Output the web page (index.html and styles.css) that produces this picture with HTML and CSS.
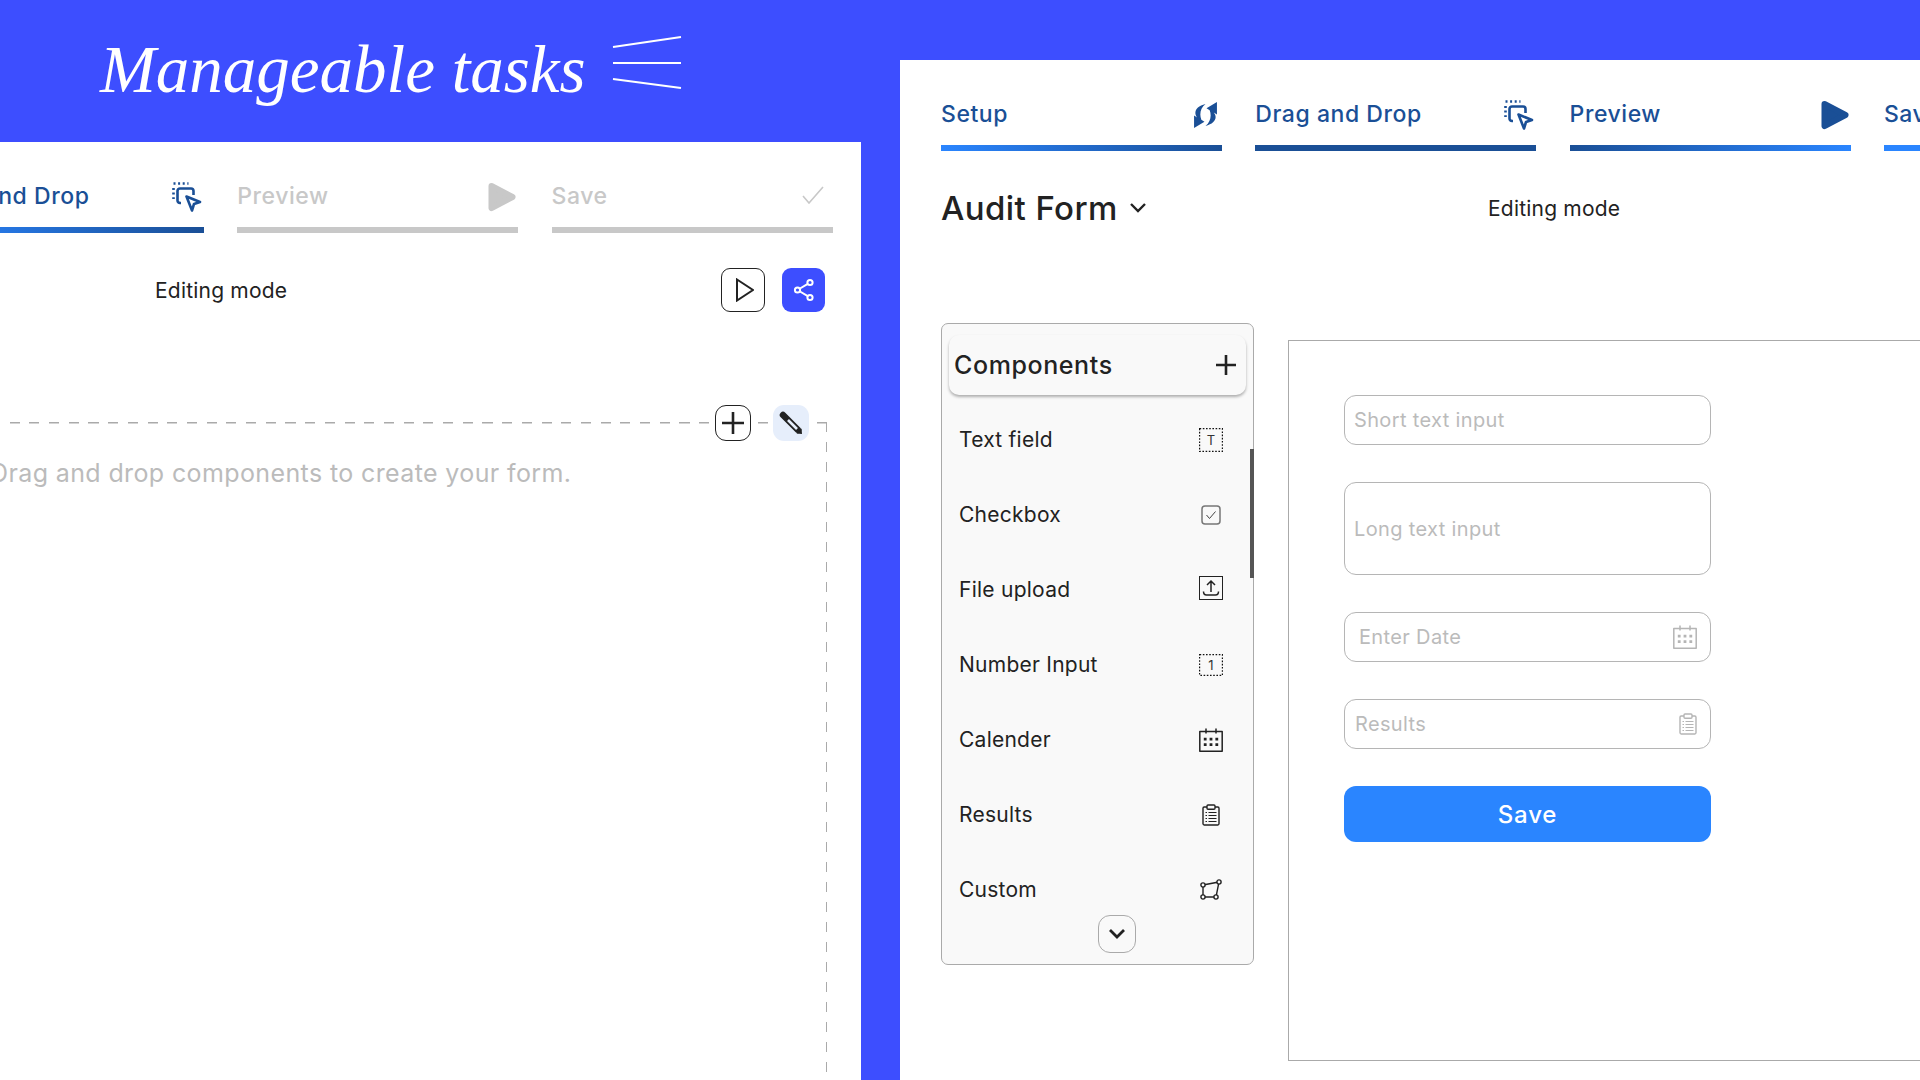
FILE: index.html
```html
<!DOCTYPE html>
<html lang="en">
<head>
  <meta charset="UTF-8" />
  <meta name="viewport" content="width=device-width, initial-scale=1.0" />
  <title>Manageable tasks</title>
  <link rel="stylesheet" href="styles.css">
</head>
<body>
  <svg class="sprites" width="0" height="0">
    <symbol id="i-drag" viewBox="0 0 30 30">
      <path d="M1.500 1.500h15M1.500 6v11" fill="none" stroke="currentColor" stroke-width="2.600" stroke-dasharray="2 2.600"/>
      <path d="M9 21H8a2.500 2.500 0 0 1-2.500-2.500V9A2.500 2.500 0 0 1 8 6.500h11A2.500 2.500 0 0 1 21.500 9v4" fill="none" stroke="currentColor" stroke-width="2.600"/>
      <path d="M14.500 14.500 28 20l-6 2-2 6.500z" fill="none" stroke="currentColor" stroke-width="2.600" stroke-linejoin="round"/>
    </symbol>
    <symbol id="i-play-solid" viewBox="0 0 28 30">
      <path d="M3.500 4 24.500 15 3.500 26z" fill="currentColor" stroke="currentColor" stroke-width="6" stroke-linejoin="round"/>
    </symbol>
    <symbol id="i-calendar" viewBox="0 0 24 24">
      <path d="M.8 3.500h22.400v19.700H.8zM7 .5v5M17 .5v5" fill="none" stroke="currentColor" stroke-width="1.500" stroke-linejoin="round"/>
      <path d="M4.800 9.800h2.800v2.800H4.800zM10.600 9.800h2.800v2.800h-2.800zM16.400 9.800h2.800v2.800h-2.800zM4.800 15.300h2.800v2.800H4.800zM10.600 15.300h2.800v2.800h-2.800zM16.400 15.300h2.800v2.800h-2.800z" fill="currentColor"/>
    </symbol>
    <symbol id="i-clipboard" viewBox="0 0 18 22">
      <path d="M5 3H2.200A1.300 1.300 0 0 0 1 4.300v15.500A1.300 1.300 0 0 0 2.200 21h13.600a1.300 1.300 0 0 0 1.200-1.200V4.300A1.300 1.300 0 0 0 15.800 3H13" fill="none" stroke="currentColor" stroke-width="1.400"/>
      <rect x="5" y="1" width="8" height="4.200" rx="1" fill="none" stroke="currentColor" stroke-width="1.400"/>
      <path d="M3.500 8.500h1.500M6.500 8.500h8M3.500 11.500h1.500M6.500 11.500h8M3.500 14.500h1.500M6.500 14.500h8M3.500 17.500h1.500M6.500 17.500h8" stroke="currentColor" stroke-width="1.200"/>
    </symbol>
  </svg>

  <div class="stage">
    <section class="left-col">
      <div class="banner">
        <span class="banner-title">Manageable tasks</span>
        <svg class="banner-lines" width="70" height="54" viewBox="0 0 70 54"><path d="M1 11 69 1M1 27h68M1 43l68 9" stroke="#fff" stroke-width="2" fill="none"/></svg>
      </div>

      <div class="panel panel-left">
        <div class="tabs tabs-left">
          <div class="tab">
            <div class="tab-head"><span class="tab-label">Drag and Drop</span><svg class="tab-icon" width="30" height="30"><use href="#i-drag"/></svg></div>
            <div class="tab-bar bar-in"></div>
          </div>
          <div class="tab tab-off">
            <div class="tab-head"><span class="tab-label">Preview</span><svg class="tab-icon" width="28" height="30"><use href="#i-play-solid"/></svg></div>
            <div class="tab-bar"></div>
          </div>
          <div class="tab tab-off">
            <div class="tab-head"><span class="tab-label">Save</span>
              <svg class="tab-icon tab-icon-check" width="22" height="18" viewBox="0 0 22 18"><path d="M1 10l6 7L21 1" fill="none" stroke="currentColor" stroke-width="1.600"/></svg>
            </div>
            <div class="tab-bar"></div>
          </div>
        </div>

        <div class="toolbar toolbar-left">
          <span class="mode">Editing mode</span>
          <div class="tool-btns">
            <button class="tool-btn">
              <svg width="22" height="24" viewBox="0 0 22 24"><path d="M5 1.500 21 12 5 22.500z" fill="none" stroke="#222" stroke-width="2"/></svg>
            </button>
            <button class="tool-btn tool-btn-blue">
              <svg width="24" height="24" viewBox="0 0 24 24" fill="none" stroke="#fff" stroke-width="2"><circle cx="18" cy="4.500" r="2.600"/><circle cx="5.500" cy="12" r="2.600"/><circle cx="18" cy="19.500" r="2.600"/><path d="M8 10.500l7.800-4.700M8 13.500l7.800 4.700"/></svg>
            </button>
          </div>
        </div>

        <div class="canvas">
          <p class="canvas-hint">Drag and drop components to create your form.</p>
          <button class="canvas-btn canvas-add">
            <svg width="26" height="26" viewBox="0 0 26 26"><path d="M13 2v22M2 13h22" stroke="#222" stroke-width="2.600"/></svg>
          </button>
          <button class="canvas-btn canvas-edit">
            <svg width="26" height="26" viewBox="0 0 26 26"><path d="M5 5 20 20" stroke="#222" stroke-width="6.500" stroke-linecap="round"/><path d="M10 10 19 19" stroke="#e6eefb" stroke-width="2.600"/><path d="M18.500 23.500 24 24l-.5-5.500z" fill="#222"/></svg>
          </button>
        </div>
      </div>
    </section>

    <section class="panel panel-right">
      <div class="tabs">
        <div class="tab">
          <div class="tab-head"><span class="tab-label">Setup</span>
            <svg class="tab-icon tab-icon-sync" width="23" height="26" viewBox="0 0 22 25" fill="currentColor"><path d="M22 0V12L19 10C23 15 20 21 11 23C16 19 17 13 15 8L12 6Z"/><path d="M22 0V12L19 10C23 15 20 21 11 23C16 19 17 13 15 8L12 6Z" transform="rotate(180 11 12.500)"/></svg>
          </div>
          <div class="tab-bar bar-out"></div>
        </div>
        <div class="tab">
          <div class="tab-head"><span class="tab-label">Drag and Drop</span><svg class="tab-icon" width="30" height="30"><use href="#i-drag"/></svg></div>
          <div class="tab-bar"></div>
        </div>
        <div class="tab">
          <div class="tab-head"><span class="tab-label">Preview</span><svg class="tab-icon" width="28" height="30"><use href="#i-play-solid"/></svg></div>
          <div class="tab-bar bar-in"></div>
        </div>
        <div class="tab">
          <div class="tab-head"><span class="tab-label">Save</span></div>
          <div class="tab-bar bar-light"></div>
        </div>
      </div>

      <div class="toolbar">
        <div class="form-title">
          <h2>Audit Form</h2>
          <svg width="18" height="12" viewBox="0 0 18 12"><path d="M2 2l7 7 7-7" fill="none" stroke="#222" stroke-width="2.400"/></svg>
        </div>
        <span class="mode">Editing mode</span>
      </div>

      <div class="workspace">
        <aside class="components">
          <div class="components-head">
            <h3>Components</h3>
            <svg width="20" height="20" viewBox="0 0 20 20"><path d="M10 0v20M0 10h20" stroke="#222" stroke-width="2.600"/></svg>
          </div>
          <ul class="comp-list">
            <li class="comp"><span>Text field</span><span class="comp-icon">
              <svg width="24" height="24" viewBox="0 0 24 24"><rect x=".6" y=".6" width="22.800" height="22.800" fill="none" stroke="#111" stroke-width="1.200" stroke-dasharray="1.600 1.600"/><text class="dash-text" x="12" y="16.500">T</text></svg>
            </span></li>
            <li class="comp"><span>Checkbox</span><span class="comp-icon">
              <svg width="20" height="20" viewBox="0 0 20 20"><rect x="1" y="1" width="18" height="18" rx="3" fill="none" stroke="#777" stroke-width="1.500"/><path d="M5.500 10l3 3.500 6-7" fill="none" stroke="#444" stroke-width="1"/></svg>
            </span></li>
            <li class="comp"><span>File upload</span><span class="comp-icon comp-icon-up">
              <svg width="24" height="24" viewBox="0 0 24 24" fill="none" stroke="#222"><rect x=".5" y=".5" width="23" height="23"/><path d="M12 16V5M8 9l4-4 4 4" stroke-width="1.500"/><path d="M4.500 15.500c0 3 1 3.500 3 3.500h9c2 0 3-.5 3-3.500" stroke-width="1.500"/></svg>
            </span></li>
            <li class="comp"><span>Number Input</span><span class="comp-icon">
              <svg width="24" height="22" viewBox="0 0 24 22"><rect x=".6" y=".6" width="22.800" height="20.800" fill="none" stroke="#111" stroke-width="1.200" stroke-dasharray="1.600 1.600"/><text class="dash-text" x="12" y="15.500">1</text></svg>
            </span></li>
            <li class="comp"><span>Calender</span><span class="comp-icon"><svg class="ico-dark" width="24" height="24"><use href="#i-calendar"/></svg></span></li>
            <li class="comp"><span>Results</span><span class="comp-icon"><svg class="ico-dark" width="18" height="22"><use href="#i-clipboard"/></svg></span></li>
            <li class="comp"><span>Custom</span><span class="comp-icon">
              <svg width="22" height="22" viewBox="0 0 22 22" fill="none" stroke="#222" stroke-width="1.400"><path d="M3 6 19 3 16 18H3z"/><g fill="#f9f9f9"><circle cx="3" cy="6" r="2.100"/><circle cx="19" cy="3" r="2.100"/><circle cx="3" cy="18" r="2.100"/><circle cx="16" cy="18" r="2.100"/></g></svg>
            </span></li>
          </ul>
          <div class="scroll-thumb"></div>
          <button class="comp-more">
            <svg width="18" height="12" viewBox="0 0 18 12"><path d="M2 2l7 7 7-7" fill="none" stroke="#222" stroke-width="2.800"/></svg>
          </button>
        </aside>

        <div class="form-area">
          <div class="field"><span class="hint">Short text input</span></div>
          <div class="field field-long"><span class="hint">Long text input</span></div>
          <div class="field field-date"><span class="hint">Enter Date</span><svg class="ico-faint" width="24" height="24"><use href="#i-calendar"/></svg></div>
          <div class="field field-result"><span class="hint">Results</span><svg class="ico-faint" width="18" height="22"><use href="#i-clipboard"/></svg></div>
          <button class="save-btn">Save</button>
        </div>
      </div>
    </section>
  </div>
</body>
</html>
```

FILE: styles.css
```css
* {
  box-sizing: border-box;
}

body {
  margin: 0;
  height: 1080px;
  overflow: hidden;
  background-color: #3d4eff;
  color: #222;
  font-family: Inter, "Noto Sans", sans-serif;
}

h2, h3, p, ul {
  margin: 0;
  padding: 0;
}

button {
  font-family: inherit;
  cursor: pointer;
}

.sprites {
  position: absolute;
}

.stage {
  display: flex;
  gap: 39px;
  height: 1080px;
}

.left-col {
  display: flex;
  flex-direction: column;
  width: 861px;
  flex-shrink: 0;
}

.banner {
  display: flex;
  align-items: center;
  gap: 26px;
  height: 142px;
  padding: 0 0 4px 100px;
  color: #fff;
}

.banner-title {
  font-family: "Liberation Serif", serif;
  font-style: italic;
  font-size: 67px;
  line-height: 1;
  white-space: nowrap;
}

.banner-lines {
  margin-bottom: 12px;
}

.panel {
  background-color: #fff;
  overflow: hidden;
  padding-top: 40px;
}

.panel-left {
  flex: 1;
}

.panel-right {
  flex: 1;
  margin-top: 60px;
  padding-left: 41px;
}

/* tabs */

.tabs {
  display: flex;
  gap: 33.3px;
}

.tabs-left {
  margin-left: -77px;
}

.tab {
  width: 281px;
  flex-shrink: 0;
  color: #1a4f96;
}

.tab-off {
  color: #c8c8c8;
}

.tab-head {
  display: flex;
  align-items: center;
  justify-content: space-between;
  height: 30px;
  margin-bottom: 15px;
}

.tab-label {
  font-size: 23px;
  font-weight: 500;
  letter-spacing: 0.55px;
  padding-bottom: 2px;
}

.tab-icon {
  display: block;
  margin-right: 2px;
}

.tab-icon-sync {
  margin-right: 5px;
}

.tab-icon-check {
  margin: -5px 9px 0 0;
}

.tab-bar {
  height: 6px;
  background-color: #1a4f96;
}

.tab-off .tab-bar {
  background-color: #c8c8c8;
}

.bar-out {
  background: linear-gradient(90deg, #2a85ff, #1a4f96);
}

.bar-in {
  background: linear-gradient(90deg, #1a4f96, #2a85ff);
}

.tabs-left .bar-in {
  background: linear-gradient(90deg, #2a85ff, #1a4f96);
}

.bar-light {
  background-color: #2a85ff;
}

/* toolbar */

.toolbar {
  display: flex;
  align-items: center;
  height: 44px;
  margin-top: 35px;
}

.toolbar-left {
  justify-content: space-between;
  padding: 0 36px 0 155px;
}

.mode {
  font-size: 21px;
  letter-spacing: 0.2px;
}

.form-title {
  display: flex;
  align-items: center;
  gap: 11px;
  width: 547px;
}

.form-title h2 {
  font-size: 33px;
  font-weight: 500;
  letter-spacing: 0.4px;
}

.tool-btns {
  display: flex;
  gap: 17px;
}

.tool-btn {
  display: flex;
  align-items: center;
  justify-content: center;
  width: 44px;
  height: 44px;
  padding: 0;
  background-color: #fff;
  border: 1.5px solid #222;
  border-radius: 9px;
}

.tool-btn-blue {
  width: 43px;
  background-color: #3d4eff;
  border: none;
}

/* left canvas */

.canvas {
  position: relative;
  height: 700px;
  width: 837px;
  margin: 110px 0 0 -10px;
  padding: 34px 0 0 0;
  background-image:
    repeating-linear-gradient(90deg, #aaa 0 10px, transparent 10px 19.7px),
    repeating-linear-gradient(180deg, #aaa 0 10px, transparent 10px 20px);
  background-size: 100% 1.5px, 1.5px 100%;
  background-position: 0 0, 100% 0;
  background-repeat: no-repeat;
}

.canvas-hint {
  font-size: 25px;
  line-height: 34px;
  letter-spacing: 0.38px;
  color: #bbb;
  white-space: nowrap;
}

.canvas-btn {
  position: absolute;
  top: -17px;
  display: flex;
  align-items: center;
  justify-content: center;
  width: 36px;
  height: 36px;
  padding: 0;
  border-radius: 11px;
}

.canvas-add {
  left: 725px;
  background-color: #fff;
  border: 1.5px solid #222;
}

.canvas-edit {
  left: 783px;
  background-color: #e6eefb;
  border: none;
}

/* right workspace */

.workspace {
  display: flex;
  align-items: flex-start;
  gap: 34px;
  margin-top: 93px;
}

.components {
  position: relative;
  width: 313px;
  height: 642px;
  flex-shrink: 0;
  padding: 11px 7px 0;
  background-color: #f9f9f9;
  border: 1px solid #aaa;
  border-radius: 7px;
}

.components-head {
  display: flex;
  align-items: center;
  justify-content: space-between;
  height: 60px;
  padding: 0 10px 0 5px;
  border-radius: 10px;
  box-shadow: 0 2px 3px rgba(0, 0, 0, 0.3);
}

.components-head h3 {
  font-size: 25px;
  font-weight: 500;
  letter-spacing: 0.6px;
}

.comp-list {
  list-style: none;
  margin-top: 7px;
}

.comp {
  display: flex;
  align-items: center;
  justify-content: space-between;
  height: 75px;
  padding: 0 23px 0 10px;
  font-size: 21px;
  letter-spacing: 0.25px;
}

.comp-icon {
  display: flex;
  align-items: center;
  justify-content: center;
  width: 24px;
  height: 24px;
}

.comp-icon-up {
  margin-top: -4px;
}

.dash-text {
  font-size: 13px;
  fill: #333;
  text-anchor: middle;
  letter-spacing: 0;
}

.ico-dark {
  color: #222;
}

.scroll-thumb {
  position: absolute;
  top: 125px;
  right: -1px;
  width: 4px;
  height: 129px;
  background-color: #555;
}

.comp-more {
  position: absolute;
  left: 156px;
  bottom: 11px;
  display: flex;
  align-items: center;
  justify-content: center;
  width: 38px;
  height: 38px;
  padding: 0;
  background-color: #f9f9f9;
  border: 1px solid #aaa;
  border-radius: 12px;
}

.form-area {
  display: flex;
  flex-direction: column;
  gap: 37px;
  flex: 1;
  height: 721px;
  margin: 17px -2px 0 0;
  padding: 54px 0 0 55px;
  border: 1px solid #aaa;
}

.field {
  display: flex;
  align-items: center;
  justify-content: space-between;
  width: 367px;
  height: 50px;
  padding: 0 9px;
  background-color: #fff;
  border: 1px solid #b5b5b5;
  border-radius: 12px;
}

.field-long {
  height: 93px;
}

.field-date {
  padding: 0 13px 0 14px;
}

.field-result {
  padding: 0 13px 0 10px;
}

.hint {
  font-size: 20px;
  letter-spacing: 0.35px;
  color: #bbb;
}

.ico-faint {
  color: #b5b5b5;
}

.save-btn {
  width: 367px;
  height: 56px;
  background-color: #2a85ff;
  color: #fff;
  border: none;
  border-radius: 12px;
  font-size: 24px;
  font-weight: 500;
  letter-spacing: 0.8px;
}
```
